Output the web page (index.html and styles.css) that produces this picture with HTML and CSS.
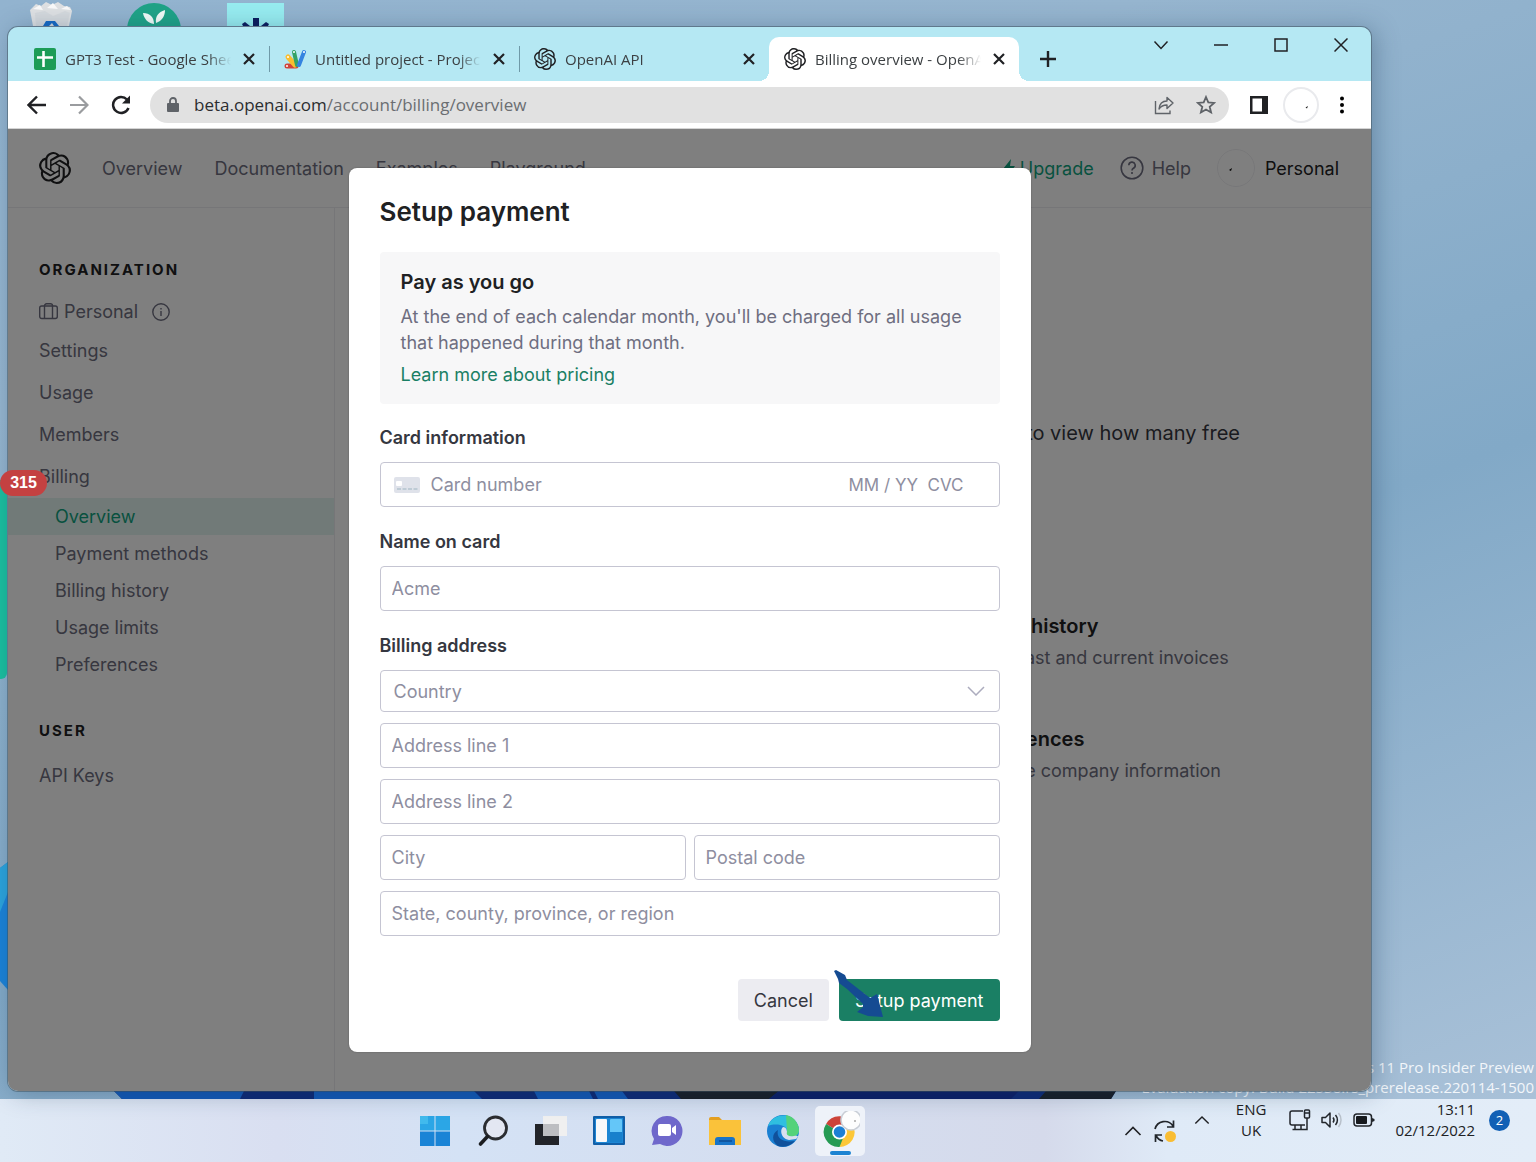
FILE: index.html
```html
<!DOCTYPE html>
<html lang="en">

<head>
    <meta charset="UTF-8">
    <meta name="viewport" content="width=device-width, initial-scale=1.0">
    <title>Billing overview - OpenAI API</title>
    <link rel="stylesheet" href="styles.css">
</head>

<body>
    <!-- Shared icons -->
    <svg class="sprite" width="0" height="0">
        <symbol id="openai" viewBox="0 0 24 24">
            <path d="M22.2819 9.8211a5.9847 5.9847 0 0 0-.5157-4.9108 6.0462 6.0462 0 0 0-6.5098-2.9A6.0651 6.0651 0 0 0 4.9807 4.1818a5.9847 5.9847 0 0 0-3.9977 2.9 6.0462 6.0462 0 0 0 .7427 7.0966 5.98 5.98 0 0 0 .511 4.9107 6.051 6.051 0 0 0 6.5146 2.9001A5.9847 5.9847 0 0 0 13.2599 24a6.0557 6.0557 0 0 0 5.7718-4.2058 5.9894 5.9894 0 0 0 3.9977-2.9001 6.0557 6.0557 0 0 0-.7475-7.0729zm-9.022 12.6081a4.4755 4.4755 0 0 1-2.8764-1.0408l.1419-.0804 4.7783-2.7582a.7948.7948 0 0 0 .3927-.6813v-6.7369l2.02 1.1686a.071.071 0 0 1 .038.052v5.5826a4.504 4.504 0 0 1-4.4945 4.4944zm-9.6607-4.1254a4.4708 4.4708 0 0 1-.5346-3.0137l.142.0852 4.783 2.7582a.7712.7712 0 0 0 .7806 0l5.8428-3.3685v2.3324a.0804.0804 0 0 1-.0332.0615L9.74 19.9502a4.4992 4.4992 0 0 1-6.1408-1.6464zM2.3408 7.8956a4.485 4.485 0 0 1 2.3655-1.9728V11.6a.7664.7664 0 0 0 .3879.6765l5.8144 3.3543-2.0201 1.1685a.0757.0757 0 0 1-.071 0l-4.8303-2.7865A4.504 4.504 0 0 1 2.3408 7.872zm16.5963 3.8558L13.1038 8.364 15.1192 7.2a.0757.0757 0 0 1 .071 0l4.8303 2.7913a4.4944 4.4944 0 0 1-.6765 8.1042v-5.6772a.79.79 0 0 0-.407-.667zm2.0107-3.0231l-.142-.0852-4.7735-2.7818a.7759.7759 0 0 0-.7854 0L9.409 9.2297V6.8974a.0662.0662 0 0 1 .0284-.0615l4.8303-2.7866a4.4992 4.4992 0 0 1 6.6802 4.66zM8.3065 12.863l-2.02-1.1638a.0804.0804 0 0 1-.038-.0567V6.0742a4.4992 4.4992 0 0 1 7.3757-3.4537l-.142.0805L8.704 5.459a.7948.7948 0 0 0-.3927.6813zm1.0976-2.3654l2.602-1.4998 2.6069 1.4998v2.9994l-2.5974 1.4997-2.6067-1.4997Z" fill="currentColor" />
        </symbol>
        <symbol id="close" viewBox="0 0 12 12">
            <path d="M1 1l10 10M11 1L1 11" stroke="currentColor" stroke-width="2.2" fill="none" />
        </symbol>
        <symbol id="chevron-up" viewBox="0 0 18 10">
            <path d="M1.500 9L9 1.500L16.500 9" stroke="currentColor" stroke-width="1.600" fill="none" />
        </symbol>
    </svg>

    <div class="desktop">
        <div class="shortcuts">
            <svg width="44" height="26" viewBox="0 0 44 26">
                <path d="M1 10l6-6 5 2 5-4 6 3 6-3 6 4 6 1 2 4-3 15H4z" fill="#dfe1e3" />
                <path d="M4 9l7-4 3 5zM18 8l6-5 5 6zM32 9l6-3 4 4z" fill="#fafafa" />
                <path d="M6 13l10-2 8 5 12-5 5 2-3 13H7z" fill="#cfd4d9" opacity=".6" />
                <path d="M14 26l3-5h9l4 5h-5l-2-3-3 3z" fill="#1669c4" />
            </svg>
            <svg width="56" height="26" viewBox="0 0 56 26">
                <circle cx="28" cy="30" r="27" fill="#1fa387" />
                <path d="M17 13c7 0 11 4 11 11-6-1-10-5-11-11zM39 10c-7 2-10 7-9 13 6-2 9-7 9-13z" fill="#f2fbf8" />
            </svg>
            <svg width="57" height="26" viewBox="0 0 57 26">
                <path d="M0 3h57v23H0z" fill="#97ecf0" />
                <path d="M26 18h6v8h-6zM15 24l3-2 5 4h-7zM42 24l-3-2-5 4h7z" fill="#0a1a5c" />
            </svg>
        </div>

        <svg class="bloom-left" width="8" height="128" viewBox="0 0 8 128">
            <path d="M0 6l8-6v128l-8-9z" fill="#1b82d8" />
            <path d="M0 6l8-6v30l-8 20z" fill="#2ba3dc" />
        </svg>
        <svg class="bloom-bottom" width="1002" height="8" viewBox="0 0 1002 8">
            <path d="M0 0h1002l-5 8H8z" fill="#0c2875" />
            <path d="M0 0h130l-4 8H8zM200 0h160l8 8H200zM420 0h55l4 8h-55zM480 0h28l6 8h-30z" fill="#1157b5" />
            <path d="M560 0h105l-10 8h-88zM932 0h70l-5 8h-72z" fill="#161c24" />
            <path d="M665 0h240l-8 8H655z" fill="#0a1d66" />
        </svg>

        <p class="watermark">Windows 11 Pro Insider Preview<br>Evaluation copy. Build 22538.rs_prerelease.220114-1500</p>
        <div class="side-widget"></div>

        <div class="window">
            <div class="tab-strip">
                <div class="tab">
                    <svg class="favicon" viewBox="0 0 22 22">
                        <rect width="22" height="22" rx="2" fill="#1c9c57" />
                        <path d="M3 9.500h16M9.500 3v16" stroke="#fff" stroke-width="2.600" />
                    </svg>
                    <span class="tab-title">GPT3 Test - Google Sheets</span>
                    <button class="tab-close" aria-label="Close tab"><svg width="12" height="12"><use href="#close" /></svg></button>
                </div>
                <div class="tab divided">
                    <svg class="favicon" viewBox="0 0 22 22">
                        <path d="M3 18h9" stroke="#d0443a" stroke-width="5" stroke-linecap="round" />
                        <path d="M4 9l7 8" stroke="#f9be2f" stroke-width="5" stroke-linecap="round" />
                        <path d="M10 4l3 13" stroke="#34a365" stroke-width="4" stroke-linecap="round" />
                        <path d="M20 4l-5 13" stroke="#3484e0" stroke-width="4" stroke-linecap="round" />
                        <circle cx="3" cy="18" r="1" fill="#fff" />
                        <circle cx="4" cy="9" r="1" fill="#fff" />
                        <circle cx="10" cy="4" r="1" fill="#fff" />
                        <circle cx="20" cy="4" r="1" fill="#fff" />
                    </svg>
                    <span class="tab-title">Untitled project - Project Editor</span>
                    <button class="tab-close" aria-label="Close tab"><svg width="12" height="12"><use href="#close" /></svg></button>
                </div>
                <div class="tab divided">
                    <svg class="favicon"><use href="#openai" /></svg>
                    <span class="tab-title">OpenAI API</span>
                    <button class="tab-close" aria-label="Close tab"><svg width="12" height="12"><use href="#close" /></svg></button>
                </div>
                <div class="tab active">
                    <svg class="favicon"><use href="#openai" /></svg>
                    <span class="tab-title">Billing overview - OpenAI API</span>
                    <button class="tab-close" aria-label="Close tab"><svg width="12" height="12"><use href="#close" /></svg></button>
                </div>
                <button class="new-tab" aria-label="New tab">
                    <svg width="16" height="16" viewBox="0 0 16 16"><path d="M8 0v16M0 8h16" stroke="currentColor" stroke-width="2.400" /></svg>
                </button>
                <div class="window-controls">
                    <button aria-label="Search tabs"><svg width="16" height="16" viewBox="0 0 16 16"><path d="M1.500 4.500L8 11.500L14.500 4.500" stroke="currentColor" stroke-width="1.500" fill="none" /></svg></button>
                    <button aria-label="Minimize"><svg width="14" height="14" viewBox="0 0 14 14"><path d="M0 7h14" stroke="currentColor" stroke-width="1.500" /></svg></button>
                    <button aria-label="Maximize"><svg width="14" height="14" viewBox="0 0 14 14"><rect x="1" y="1" width="12" height="12" stroke="currentColor" stroke-width="1.500" fill="none" /></svg></button>
                    <button aria-label="Close"><svg width="14" height="14" viewBox="0 0 14 14"><path d="M.5.5l13 13M13.500.5l-13 13" stroke="currentColor" stroke-width="1.500" /></svg></button>
                </div>
            </div>

            <div class="toolbar">
                <button class="tool" aria-label="Back"><svg width="20" height="20" viewBox="0 0 20 20"><path d="M19 10H2M10 1.500L1.500 10l8.500 8.500" stroke="currentColor" stroke-width="2.400" fill="none" /></svg></button>
                <button class="tool faded" aria-label="Forward"><svg width="20" height="20" viewBox="0 0 20 20"><path d="M1 10h17M10 1.500L18.500 10L10 18.500" stroke="currentColor" stroke-width="2.200" fill="none" /></svg></button>
                <button class="tool" aria-label="Reload"><svg width="20" height="20" viewBox="0 0 20 20"><path d="M17.500 13A8 8 0 1 1 16 4.500" stroke="currentColor" stroke-width="2.500" fill="none" /><path d="M19 .5V8.500H11z" fill="currentColor" /></svg></button>
                <div class="omnibox">
                    <svg width="12" height="16" viewBox="0 0 12 16"><rect y="6" width="12" height="9" rx="1" fill="#5f6368" /><path d="M3 6V4a3 3 0 0 1 6 0v2" stroke="#5f6368" stroke-width="1.800" fill="none" /></svg>
                    <p class="url">beta.openai.com<span>/account/billing/overview</span></p>
                    <button class="tool" aria-label="Share"><svg width="20" height="20" viewBox="0 0 20 20"><path d="M1.500 6v12.500h14.500v-3" stroke="currentColor" stroke-width="1.400" fill="none" /><path d="M5 14c.5-5 3-8 8-8V2.500l6 5.500-6 5.500V10c-4 0-6 1-8 4z" stroke="currentColor" stroke-width="1.400" fill="none" stroke-linejoin="round" /></svg></button>
                    <button class="tool" aria-label="Bookmark"><svg width="20" height="20" viewBox="0 0 20 20"><path d="M10 2l2.300 5.400 5.900.5-4.500 3.900 1.400 5.700L10 14.500l-5.100 3 1.400-5.700-4.500-3.900 5.900-.5z" stroke="currentColor" stroke-width="1.800" fill="none" /></svg></button>
                </div>
                <button class="tool side-panel" aria-label="Side panel"><svg width="18" height="18" viewBox="0 0 18 18"><path d="M0 0h18v18H0zM2.500 2.500v13h9.500v-13z" fill="currentColor" fill-rule="evenodd" /></svg></button>
                <button class="profile" aria-label="Profile"><svg width="32" height="32" viewBox="0 0 32 32"><path d="M20.500 18.500l2.500-1.500-1 2.500z" fill="#222" /></svg></button>
                <button class="tool" aria-label="Menu"><svg width="4" height="18" viewBox="0 0 4 18"><circle cx="2" cy="2.500" r="2" /><circle cx="2" cy="9" r="2" /><circle cx="2" cy="15.500" r="2" /></svg></button>
            </div>

            <div class="page">
                <header class="page-header">
                    <svg class="logo"><use href="#openai" /></svg>
                    <nav class="top-nav">
                        <a href="#">Overview</a>
                        <a href="#">Documentation</a>
                        <a href="#">Examples</a>
                        <a href="#">Playground</a>
                    </nav>
                    <div class="account">
                        <a href="#" class="upgrade">
                            <svg width="12" height="20" viewBox="0 0 12 20"><path d="M8 1L0 11h5l-1 8 8-11H7z" fill="currentColor" /></svg>
                            Upgrade
                        </a>
                        <a href="#" class="help">
                            <svg width="24" height="24" viewBox="0 0 24 24" fill="none" stroke="currentColor"><circle cx="12" cy="12" r="10.800" stroke-width="1.600" /><path d="M8.800 9.300a3.200 3.200 0 1 1 4.600 2.900c-1 .6-1.400 1-1.400 2.200" stroke-width="1.600" /><path d="M12 16v2" stroke-width="1.600" /></svg>
                            Help
                        </a>
                        <a href="#" class="me">
                            <svg width="38" height="38" viewBox="0 0 38 38"><circle cx="19" cy="19" r="18.500" fill="none" stroke="#efeff2" /><path d="M12 21l3-2-1 3z" fill="#000" /></svg>
                            Personal
                        </a>
                    </div>
                </header>

                <div class="page-body">
                    <aside class="sidebar">
                        <h2>Organization</h2>
                        <a href="#" class="org">
                            <svg width="19" height="18" viewBox="0 0 19 18" fill="none" stroke="currentColor" stroke-width="1.400"><rect x=".7" y="3" width="17.600" height="12.500" rx="2" /><path d="M5.500 15V2.800a2 2 0 0 1 2-2h4a2 2 0 0 1 2 2V15" /></svg>
                            Personal
                            <svg class="info" width="18" height="18" viewBox="0 0 18 18" fill="none" stroke="currentColor" stroke-width="1.400"><circle cx="9" cy="9" r="8.200" /><path d="M9 8v5M9 5v1.500" /></svg>
                        </a>
                        <a href="#">Settings</a>
                        <a href="#">Usage</a>
                        <a href="#">Members</a>
                        <a href="#">Billing</a>
                        <nav class="sub-nav">
                            <a href="#" class="selected">Overview</a>
                            <a href="#">Payment methods</a>
                            <a href="#">Billing history</a>
                            <a href="#">Usage limits</a>
                            <a href="#">Preferences</a>
                        </nav>
                        <h2>User</h2>
                        <a href="#">API Keys</a>
                    </aside>
                    <main class="content">
                        <p class="intro">Visit the usage page to view how many free</p>
                        <div class="cards">
                            <section>
                                <h3>Billing history</h3>
                                <p>View past and current invoices</p>
                            </section>
                            <section>
                                <h3>Preferences</h3>
                                <p>Manage company information</p>
                            </section>
                        </div>
                    </main>
                </div>

                <div class="overlay">
                    <form class="modal">
                        <h1>Setup payment</h1>
                        <div class="plan">
                            <h2>Pay as you go</h2>
                            <p>At the end of each calendar month, you'll be charged for all usage that happened during that month.</p>
                            <a href="#">Learn more about pricing</a>
                        </div>

                        <label for="card">Card information</label>
                        <div class="card-field">
                            <svg width="26" height="18" viewBox="0 0 26 18"><rect y="1" width="26" height="16" rx="2" fill="#dfe2ea" /><rect x="2" y="5" width="6" height="5" rx="1" fill="#fff" /><path d="M3 13h4M8.500 13h4M14 13h4M19.500 13h4" stroke="#b4c4ce" stroke-width="1.600" /></svg>
                            <input id="card" class="card-number" type="text" placeholder="Card number">
                            <input class="expiry" type="text" placeholder="MM / YY" aria-label="Expiry date">
                            <input class="cvc" type="text" placeholder="CVC" aria-label="CVC">
                        </div>

                        <label for="name">Name on card</label>
                        <input id="name" class="field" type="text" placeholder="Acme">

                        <label for="country">Billing address</label>
                        <div class="address">
                            <div class="select-wrap">
                                <select id="country">
                                    <option>Country</option>
                                </select>
                                <svg width="18" height="10" viewBox="0 0 18 10"><path d="M1 1l8 8 8-8" stroke="#acacbe" stroke-width="1.500" fill="none" /></svg>
                            </div>
                            <input class="field" type="text" placeholder="Address line 1" aria-label="Address line 1">
                            <input class="field" type="text" placeholder="Address line 2" aria-label="Address line 2">
                            <div class="row">
                                <input class="field" type="text" placeholder="City" aria-label="City">
                                <input class="field" type="text" placeholder="Postal code" aria-label="Postal code">
                            </div>
                            <input class="field" type="text" placeholder="State, county, province, or region" aria-label="State, county, province, or region">
                        </div>

                        <div class="actions">
                            <button type="button" class="cancel">Cancel</button>
                            <button type="button" class="submit">Setup payment
                                <svg class="arrow" width="52" height="50" viewBox="0 0 52 50"><path d="M1 2L3 1L12 6L14 11L37 29L44 25L50 48L35 47L24 43L30 38V35L14 20L6 14L5 10z" fill="#154b92" /></svg>
                            </button>
                        </div>
                    </form>
                </div>
            </div>
        </div>

        <span class="count-badge">315</span>
    </div>

    <footer class="taskbar">
        <div class="apps">
            <button aria-label="Start">
                <svg width="32" height="32" viewBox="0 0 32 32"><path d="M1 1h14.500v14.500H1zM16.500 1H31v14.500H16.500z" fill="#2ba6e6" /><path d="M1 16.500h14.500V31H1zM16.500 16.500H31V31H16.500z" fill="#1a84d6" /><path d="M1 1h8v8H1z" fill="#4cc3f0" opacity=".7" /></svg>
            </button>
            <button aria-label="Search">
                <svg width="32" height="32" viewBox="0 0 32 32"><circle cx="18.500" cy="13" r="11" fill="#e3e7f2" stroke="#2b2d31" stroke-width="2.800" /><path d="M10.500 21.500L3.500 29" stroke="#1b1d20" stroke-width="3.600" stroke-linecap="round" /></svg>
            </button>
            <button aria-label="Task view">
                <svg width="32" height="32" viewBox="0 0 32 32"><path d="M0 9h24v21H0z" fill="#222429" /><path d="M8 1h24v20H8z" fill="#f0f0f0" /><path d="M8 9h16v12H8z" fill="#bdbec1" /></svg>
            </button>
            <button aria-label="Widgets">
                <svg width="32" height="32" viewBox="0 0 32 32"><rect y="1" width="32" height="29" rx="1" fill="#115fa8" /><rect x="2" y="3" width="28" height="25" fill="#1c86d4" /><rect x="3" y="4" width="11" height="23" rx="1" fill="#f7f8fa" /><rect x="17" y="4" width="12" height="23" rx="1" fill="#64c6f8" /><path d="M17 17h12v10H17z" fill="#1880cc" /></svg>
            </button>
            <button aria-label="Chat">
                <svg width="32" height="32" viewBox="0 0 32 32"><path d="M16 1a15 15 0 1 1-7 28L1 30l2-6A15 15 0 0 1 16 1z" fill="#6f68cb" /><rect x="7" y="9" width="13" height="12" rx="2" fill="#fff" /><path d="M21 13l4-3v10l-4-3z" fill="#fff" /></svg>
            </button>
            <button aria-label="File Explorer">
                <svg width="32" height="32" viewBox="0 0 32 32"><path d="M0 4a2 2 0 0 1 2-2h8l3 3H0z" fill="#e5a020" /><path d="M0 5h32v25H0z" fill="#fac23a" /><path d="M6 30v-5a3 3 0 0 1 3-3h14a3 3 0 0 1 3 3v5z" fill="#1874c8" /><path d="M10 26h13" stroke="#0e4c93" stroke-width="1.500" /></svg>
            </button>
            <button aria-label="Edge">
                <svg width="32" height="32" viewBox="0 0 32 32"><circle cx="16" cy="16" r="16" fill="#1a80d2" /><path d="M1 11A16 16 0 0 1 32 15c0 6-6 8-11 6-3-1-2-3-1-5 0-6-11-8-19-5z" fill="#2fbfe0" /><path d="M19 0a16 16 0 0 1 13 15c0 6-6 8-11 6-3-1-2-3-1-5z" fill="#54d27a" /><path d="M11 15c-2 8 4 13 17 11A16 16 0 0 1 11 31c-7-5-6-13 0-16z" fill="#10519b" /><path d="M16 12c-4 4-1 12 6 13l7-1c4-3 1-4-2-3-6 1-8-1-7-4 0-2-1-5-4-5z" fill="#d8dfef" /></svg>
            </button>
            <button class="running" aria-label="Chrome">
                <svg width="40" height="40" viewBox="0 0 40 40"><path d="M6.100 13A15 15 0 0 1 32.900 14L19.500 21z" fill="#cc4339" /><path d="M32.900 14a15 15 0 0 1-13.400 22L19.500 21z" fill="#fcc737" /><path d="M19.500 36A15 15 0 0 1 6.100 13l13.400 8 4 5z" fill="#259a53" /><circle cx="19.500" cy="21" r="7.500" fill="#fff" /><circle cx="19.500" cy="21" r="5.800" fill="#1c80d4" /><circle cx="31" cy="9" r="10" fill="#fdfdfd" stroke="#c9ced6" stroke-width="1.500" /><circle cx="35" cy="10" r="1" fill="#aaa" /></svg>
            </button>
        </div>
        <div class="tray-low">
            <svg width="18" height="10"><use href="#chevron-up" /></svg>
            <svg width="24" height="24" viewBox="0 0 24 24"><path d="M2 10A10 10 0 0 1 20 7M20.500 1.500V8h-6.500M10 22c-3-.5-5.500-2.500-7-5.500M2.500 23V16H9" stroke="#22262b" stroke-width="1.700" fill="none" /><circle cx="17.500" cy="17.500" r="5.500" fill="#f9bd33" /></svg>
        </div>
        <div class="tray">
            <svg width="16" height="10"><use href="#chevron-up" /></svg>
            <p class="lang">ENG<br>UK</p>
            <svg width="22" height="22" viewBox="0 0 22 22" fill="none" stroke="#22262b" stroke-width="1.500"><path d="M14 2H3a2 2 0 0 0-2 2v10a2 2 0 0 0 2 2h13M6 16v4M12 16v4M3.500 20.500h14.500V9" /><rect x="15.500" y="1" width="5" height="8" rx="1" /><path d="M15.500 4h5" /></svg>
            <svg width="22" height="18" viewBox="0 0 22 18" fill="none" stroke="#22262b" stroke-width="1.500"><path d="M1 6.500h3.500L9 2v14l-4.500-4.500H1z" stroke-linejoin="round" /><path d="M12 6.500a4 4 0 0 1 0 5M14.500 4a7.500 7.500 0 0 1 0 10" /><path d="M17.500 2a11 11 0 0 1 0 14" stroke="#b9c1cb" /></svg>
            <svg width="22" height="14" viewBox="0 0 22 14"><rect x="1" y="1" width="17.500" height="12" rx="3" fill="none" stroke="#22262b" stroke-width="1.500" /><rect x="3" y="3" width="11" height="8" rx="1" fill="#16191d" /><path d="M19 5l2.500 1v2L19 9z" fill="#22262b" /></svg>
            <p class="clock">13:11<br>02/12/2022</p>
            <span class="notice">2</span>
        </div>
    </footer>
</body>

</html>
```

FILE: styles.css
```css
* {
    box-sizing: border-box;
}

body {
    margin: 0;
    height: 100vh;
    display: flex;
    flex-direction: column;
    overflow: hidden;
    font-family: "Open Sans", "Noto Sans", sans-serif;
    color: #202124;
}

h1,
h2,
h3,
p {
    margin: 0;
}

a {
    color: inherit;
    text-decoration: none;
}

button {
    display: flex;
    align-items: center;
    justify-content: center;
    padding: 0;
    border: none;
    background: none;
    color: inherit;
    font: inherit;
    cursor: pointer;
}

.sprite {
    position: absolute;
}

/* Desktop */
.desktop {
    position: relative;
    flex: 1;
    background: linear-gradient(160deg, #92b3cf 0%, #96b5cf 25%, #82a9c7 60%, #a9c1d8 100%);
}

.shortcuts {
    display: flex;
    gap: 53px;
    padding-left: 29px;
}

.shortcuts svg:nth-child(2) {
    margin-right: -8px;
}

.bloom-left {
    position: absolute;
    left: 0;
    bottom: 109px;
}

.bloom-bottom {
    position: absolute;
    left: 114px;
    bottom: 0;
}

.watermark {
    position: absolute;
    right: 2px;
    bottom: 2px;
    font-size: 15px;
    line-height: 20px;
    text-align: right;
    color: #f2f6fa;
}

.side-widget {
    position: absolute;
    left: 0;
    top: 480px;
    width: 7px;
    height: 199px;
    background: #1abf9f;
    border-bottom-right-radius: 6px;
}

.count-badge {
    position: absolute;
    left: 0;
    top: 470px;
    width: 47px;
    border-radius: 13px;
    background: #c44141;
    color: #fff;
    font: bold 16px/26px "Liberation Sans", sans-serif;
    text-align: center;
}

/* Browser window */
.window {
    position: absolute;
    top: 27px;
    right: 165px;
    bottom: 8px;
    left: 8px;
    display: flex;
    flex-direction: column;
    border-radius: 10px;
    overflow: hidden;
    box-shadow: 0 0 0 1px rgba(60, 80, 90, 0.5), 4px 2px 24px rgba(30, 60, 90, 0.35);
}

.tab-strip {
    display: flex;
    align-items: flex-end;
    height: 54px;
    padding-left: 11px;
    background: #b5e8f3;
}

.tab {
    position: relative;
    display: flex;
    align-items: center;
    flex: 0 1 250px;
    min-width: 0;
    height: 44px;
    padding: 0 14px 0 15px;
}

.tab.divided::before {
    content: "";
    position: absolute;
    left: 0;
    top: 9px;
    width: 1px;
    height: 26px;
    background: #6f9aa8;
}

.tab.active {
    background: #fff;
    border-radius: 10px 10px 0 0;
}

.tab.active::before,
.tab.active::after {
    content: "";
    position: absolute;
    bottom: 0;
    width: 10px;
    height: 10px;
}

.tab.active::before {
    left: -10px;
    background: radial-gradient(circle at 0 0, transparent 10px, #fff 10px);
}

.tab.active::after {
    right: -10px;
    background: radial-gradient(circle at 100% 0, transparent 10px, #fff 10px);
}

.favicon {
    flex: none;
    width: 22px;
    height: 22px;
    margin-right: 9px;
}

.tab-title {
    flex: 1;
    overflow: hidden;
    white-space: nowrap;
    font-size: 15px;
    color: #3c4043;
    mask-image: linear-gradient(to right, #000 86%, transparent);
}

.tab-close {
    width: 12px;
    height: 12px;
    margin-left: 12px;
}

.new-tab {
    width: 58px;
    height: 44px;
}

.window-controls {
    display: flex;
    align-self: flex-start;
    margin-left: auto;
}

.window-controls button {
    width: 60px;
    height: 36px;
}

.toolbar {
    display: flex;
    align-items: center;
    height: 48px;
    padding: 0 8px;
    background: #fff;
    border-bottom: 1px solid #d4d4d4;
}

.tool {
    flex: none;
    width: 42px;
    height: 36px;
}

.faded {
    color: #9a9c9f;
}

.omnibox {
    display: flex;
    flex: 1;
    align-items: center;
    height: 36px;
    margin-left: 8px;
    padding: 0 2px 0 17px;
    border-radius: 18px;
    background: #e1e1e1;
}

.omnibox .tool {
    color: #5f6368;
}

.url {
    flex: 1;
    margin-left: 15px;
    font-size: 17px;
    color: #2b2d30;
}

.url span {
    color: #6b6e72;
}

.side-panel {
    width: 54px;
    padding-left: 6px;
}

.profile {
    width: 36px;
    height: 36px;
    margin-right: 2px;
    border: 2px solid #e9eaed;
    border-radius: 50%;
}

/* Page inside the browser */
.page {
    position: relative;
    display: flex;
    flex: 1;
    flex-direction: column;
    background: #fff;
    color: #353740;
    font-family: Inter, "Noto Sans", sans-serif;
    font-size: 18px;
}

.page-header {
    display: flex;
    align-items: center;
    height: 79px;
    padding: 0 32px 0 31px;
    border-bottom: 1px solid #ececf1;
    color: #6e6e80;
}

.logo {
    width: 32px;
    height: 32px;
    margin-right: 31px;
    color: #202123;
}

.top-nav {
    display: flex;
    gap: 32px;
}

.account {
    display: flex;
    align-items: center;
    gap: 26px;
    margin-left: auto;
}

.account a {
    display: flex;
    align-items: center;
    gap: 8px;
}

.account .upgrade {
    gap: 5px;
    color: #10a37f;
}

.account .me {
    gap: 10px;
    color: #202123;
}

.page-body {
    display: flex;
    flex: 1;
}

.sidebar {
    width: 327px;
    padding-top: 48px;
    border-right: 1px solid #ececf1;
    color: #6e6e80;
}

.sidebar h2 {
    margin-bottom: 10px;
    padding-left: 31px;
    font-size: 15px;
    font-weight: 700;
    line-height: 28px;
    letter-spacing: 2px;
    text-transform: uppercase;
    color: #202123;
}

.sidebar a {
    display: block;
    padding-left: 31px;
    line-height: 42px;
}

.sidebar .org {
    display: flex;
    align-items: center;
    gap: 6px;
    line-height: 36px;
}

.info {
    margin-left: 8px;
}

.sub-nav {
    margin-bottom: 34px;
}

.sidebar .sub-nav a {
    padding-left: 47px;
    line-height: 37px;
}

.sidebar .sub-nav .selected {
    background: #e2f5f1;
    color: #10a37f;
}

.content {
    flex: 1;
    padding: 210px 131px 0 40px;
}

.intro {
    font-size: 20px;
    line-height: 30px;
    text-align: right;
}

.cards {
    display: grid;
    gap: 50px;
    margin-top: 161px;
    padding-left: 592px;
}

.cards h3 {
    font-size: 20px;
    font-weight: 600;
    line-height: 34px;
    color: #202123;
}

.cards p {
    line-height: 29px;
    white-space: nowrap;
    color: #6e6e80;
}

/* Payment modal */
.overlay {
    position: absolute;
    inset: 0;
    display: flex;
    align-items: center;
    justify-content: center;
    background: rgba(0, 0, 0, 0.5);
}

.modal {
    width: 682px;
    padding: 31px;
    border-radius: 8px;
    background: #fff;
    box-shadow: 0 0 2px rgba(0, 0, 0, 0.3);
}

.modal h1 {
    margin-bottom: 28px;
    font-size: 26px;
    font-weight: 600;
    line-height: 25px;
    color: #202123;
}

.plan {
    margin-bottom: 22px;
    padding: 16px 21px;
    border-radius: 4px;
    background: #f7f7f8;
}

.plan h2 {
    margin-bottom: 8px;
    font-size: 20px;
    font-weight: 600;
    line-height: 28px;
    color: #202123;
}

.plan p {
    margin-bottom: 6px;
    line-height: 26px;
    color: #6e6e80;
}

.plan a {
    display: block;
    line-height: 26px;
    color: #1a7f64;
}

.modal label {
    display: block;
    margin-bottom: 12px;
    font-weight: 600;
    line-height: 24px;
}

.modal input,
.modal select {
    min-width: 0;
    font: inherit;
    color: #353740;
    background: #fff;
}

.modal input::placeholder {
    color: #8e8ea0;
    opacity: 1;
}

.card-field,
.field,
.modal select {
    width: 100%;
    height: 45px;
    border: 1px solid #c5c5d2;
    border-radius: 4px;
}

.card-field {
    display: flex;
    align-items: center;
    margin-bottom: 23px;
    padding: 0 12px 0 13px;
}

.card-field input {
    padding: 0;
    border: none;
    outline: none;
}

.card-field .card-number {
    flex: 1;
    margin-left: 11px;
}

.card-field .expiry,
.card-field .cvc {
    font-size: 17px;
}

.expiry {
    width: 79px;
}

.cvc {
    width: 59px;
}

.field {
    padding: 0 11px;
}

.field + label {
    margin-top: 23px;
}

.address {
    display: grid;
    gap: 11px;
}

.select-wrap {
    position: relative;
}

.modal select {
    display: block;
    height: 42px;
    padding: 0 13px;
    appearance: none;
    color: #8e8ea0;
}

.select-wrap svg {
    position: absolute;
    top: 16px;
    right: 15px;
    pointer-events: none;
}

.row {
    display: grid;
    grid-template-columns: 1fr 1fr;
    gap: 8px;
}

.actions {
    display: flex;
    justify-content: flex-end;
    gap: 10px;
    margin-top: 43px;
}

.actions button {
    height: 42px;
    padding: 0 16px;
    border-radius: 4px;
}

.cancel {
    background: #ececf1;
}

.submit {
    position: relative;
    background: #1a7f64;
    color: #fff;
}

.arrow {
    position: absolute;
    left: -6px;
    top: -10px;
}

/* Taskbar */
.taskbar {
    display: flex;
    height: 63px;
    padding: 0 26px 0 406px;
    background: linear-gradient(90deg, #e0eaf6 0%, #d9dff1 18%, #d4e2f5 30%, #d5daeb 68%, #dfeaf7 76%, #e3edf8 100%);
}

.apps {
    display: flex;
    align-items: center;
}

.apps button {
    width: 58px;
    height: 50px;
}

.apps .running {
    position: relative;
    width: 50px;
    margin-left: 3px;
    border-radius: 5px;
    background: #eef2f9;
}

.running::after {
    content: "";
    position: absolute;
    bottom: 1px;
    width: 21px;
    height: 4px;
    border-radius: 2px;
    background: #1c83d2;
}

.tray-low {
    display: flex;
    align-items: center;
    gap: 11px;
    margin-left: auto;
    padding-right: 17px;
}

.tray {
    display: flex;
    align-items: center;
    height: 42px;
    gap: 10px;
    font-size: 15px;
    line-height: 21px;
}

.lang {
    margin: 0 13px 0 16px;
    text-align: center;
}

.clock {
    margin: 0 4px 0 10px;
    text-align: right;
}

.notice {
    width: 21px;
    border-radius: 50%;
    background: #1160b5;
    color: #fff;
    font-size: 13px;
    text-align: center;
}
```
